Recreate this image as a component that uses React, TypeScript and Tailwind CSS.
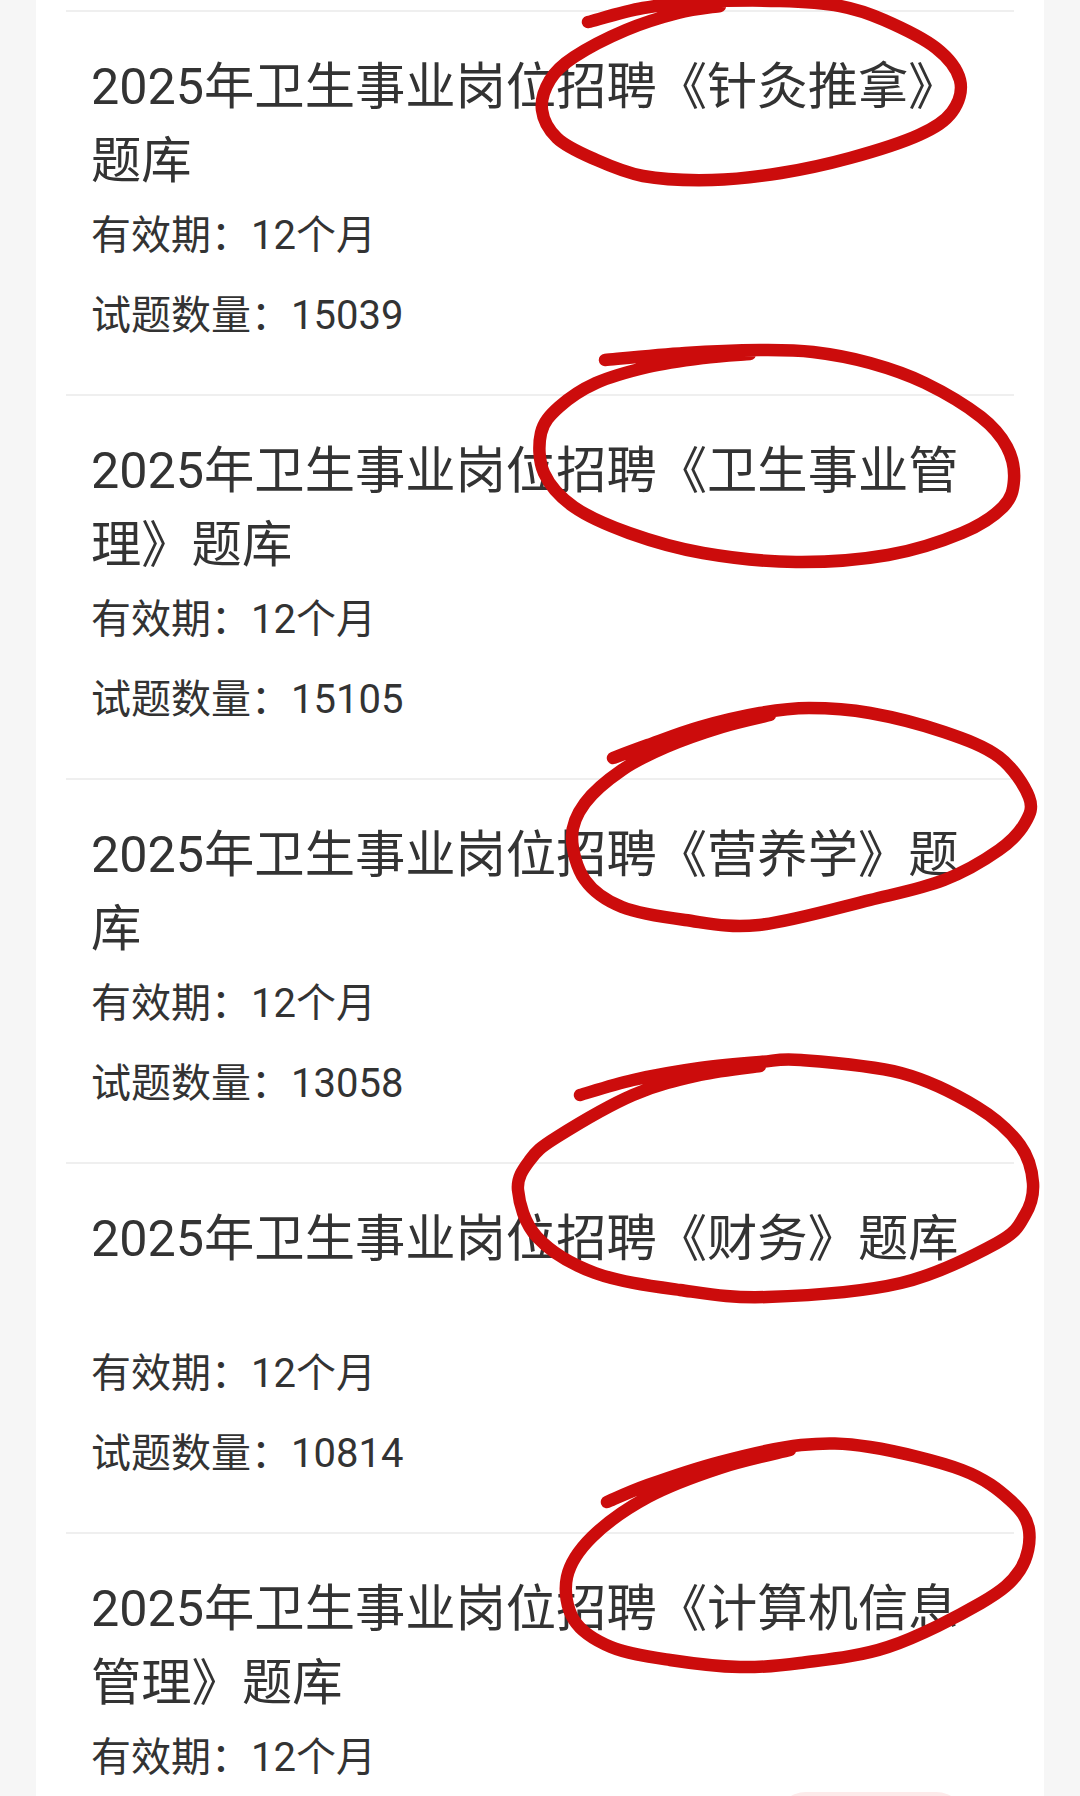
import React from "react";

type Item = { title: string; count?: string };

const items: Item[] = [
  { title: "2025年卫生事业岗位招聘《针灸推拿》题库", count: "15039" },
  { title: "2025年卫生事业岗位招聘《卫生事业管理》题库", count: "15105" },
  { title: "2025年卫生事业岗位招聘《营养学》题库", count: "13058" },
  { title: "2025年卫生事业岗位招聘《财务》题库", count: "10814" },
  { title: "2025年卫生事业岗位招聘《计算机信息管理》题库" },
];

type P = [number, number];

const loops: P[][] = [
  [
    [588, 22], [643, 8], [700, 2], [780, 1], [840, 6], [884, 20], [936, 48], [960, 80],
    [952, 112], [919, 135], [850, 158], [781, 173], [712, 180], [643, 176], [592, 158],
    [557, 138], [542, 110], [550, 80], [574, 57], [626, 30], [678, 13], [720, 6],
  ],
  [
    [605, 360], [685, 353], [760, 350], [813, 352], [870, 363], [925, 383], [981, 417],
    [1007, 447], [1014, 480], [1003, 507], [962, 533], [888, 555], [796, 562], [703, 553],
    [629, 533], [574, 507], [544, 473], [541, 433], [559, 407], [596, 383], [648, 367],
    [703, 358], [750, 354],
  ],
  [
    [613, 758], [648, 745], [700, 727], [760, 713], [809, 708], [870, 713], [944, 732],
    [999, 757], [1029, 797], [1025, 823], [999, 850], [944, 880], [870, 900], [759, 925],
    [685, 920], [622, 907], [585, 880], [572, 837], [585, 803], [622, 770], [666, 747],
    [722, 727], [770, 715],
  ],
  [
    [580, 1095], [633, 1080], [700, 1068], [760, 1062], [801, 1060], [901, 1073],
    [977, 1107], [1020, 1145], [1033, 1183], [1025, 1215], [997, 1243], [901, 1283],
    [767, 1297], [680, 1290], [595, 1273], [537, 1237], [518, 1190], [530, 1160],
    [557, 1137], [633, 1095], [700, 1075], [760, 1066],
  ],
  [
    [607, 1502], [648, 1485], [720, 1462], [801, 1445], [870, 1447], [962, 1470],
    [1010, 1500], [1029, 1530], [1020, 1570], [981, 1603], [888, 1647], [800, 1663],
    [740, 1667], [670, 1660], [611, 1647], [574, 1620], [567, 1577], [592, 1537],
    [648, 1497], [720, 1468], [790, 1450],
  ],
];

function smoothPath(pts: P[]): string {
  let d = `M${pts[0][0]},${pts[0][1]}`;
  for (let i = 0; i < pts.length - 1; i++) {
    const p0 = pts[i - 1] || pts[i];
    const p1 = pts[i];
    const p2 = pts[i + 1];
    const p3 = pts[i + 2] || p2;
    const c1x = p1[0] + (p2[0] - p0[0]) / 6;
    const c1y = p1[1] + (p2[1] - p0[1]) / 6;
    const c2x = p2[0] - (p3[0] - p1[0]) / 6;
    const c2y = p2[1] - (p3[1] - p1[1]) / 6;
    d += ` C${c1x.toFixed(1)},${c1y.toFixed(1)} ${c2x.toFixed(1)},${c2y.toFixed(1)} ${p2[0]},${p2[1]}`;
  }
  return d;
}

function Row({ item }: { item: Item }) {
  return (
    <div className="border-t-2 border-[#efefef] pl-[25px] pr-[21px] pt-[38px] pb-[40px]">
      <div className="min-h-[134px] text-[50.3px] leading-[74px] text-[#333333]">{item.title}</div>
      <div className="text-[40px] leading-[76px] text-[#333333]">有效期：12个月</div>
      {item.count ? (
        <div className="mt-[4px] text-[40px] leading-[76px] text-[#333333]">
          试题数量：{item.count}
        </div>
      ) : (
        <div className="mt-[4px] h-[76px]" />
      )}
    </div>
  );
}

export default function App() {
  return (
    <div className="relative h-[1796px] w-[1080px] overflow-hidden bg-[#f6f6f6] font-[Roboto,'Noto_Sans_CJK_SC',sans-serif]">
      <div className="mx-[36px] bg-white px-[30px]">
        <div className="h-[10px]" />
        {items.map((it, i) => (
          <Row key={i} item={it} />
        ))}
      </div>

      <div className="absolute left-[776px] top-[1792px] h-[60px] w-[190px] rounded-full bg-[#fdeaea]" />

      <svg
        className="pointer-events-none absolute left-0 top-0"
        width="1080"
        height="1796"
        viewBox="0 0 1080 1796"
        fill="none"
      >
        {loops.map((pts, i) => (
          <path
            key={i}
            d={smoothPath(pts)}
            stroke="#cc0c0c"
            strokeWidth={12.5}
            strokeLinecap="round"
            strokeLinejoin="round"
          />
        ))}
      </svg>
    </div>
  );
}
